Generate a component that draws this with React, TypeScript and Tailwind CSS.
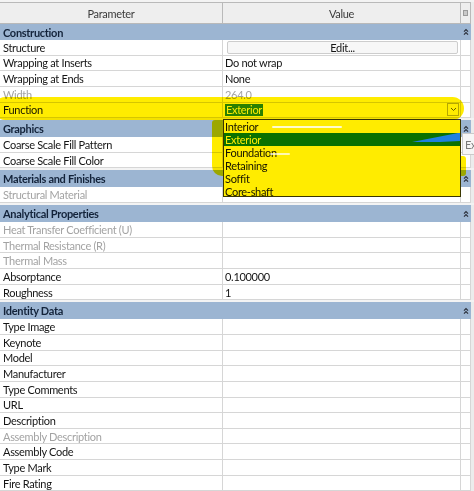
import type { ReactNode } from 'react'

type Row = {
  label: string
  value?: ReactNode
  muted?: boolean
}

type Section = {
  title: string
  first?: boolean
  rows: Row[]
}

function Collapse() {
  return (
    <svg width="6" height="8" viewBox="0 0 6 8" className="shrink-0">
      <path d="M1 3.6 L3 1.6 L5 3.6" fill="none" stroke="#2a2f3a" strokeWidth="1.2" />
      <path d="M1 6.6 L3 4.6 L5 6.6" fill="none" stroke="#2a2f3a" strokeWidth="1.2" />
    </svg>
  )
}

function EditButton() {
  return (
    <div className="mx-[2px] flex h-[13px] flex-1 items-center justify-center rounded-[2px] border border-[#cdcdcd] bg-[#f7f7f7]">
      Edit...
    </div>
  )
}

function FunctionValue() {
  return (
    <div className="flex flex-1 items-center justify-between pr-[1px]">
      <span className="bg-[#2a8ae0] px-[1px] leading-[12px] text-white">Exterior</span>
      <div className="flex h-[13px] w-[12px] items-center justify-center border border-[#b5b5b5] bg-white">
        <svg width="7" height="5" viewBox="0 0 7 5">
          <path d="M1 1 L3.5 3.5 L6 1" fill="none" stroke="#666" strokeWidth="1" />
        </svg>
      </div>
    </div>
  )
}

const sections: Section[] = [
  {
    title: 'Construction',
    first: true,
    rows: [
      { label: 'Structure', value: <EditButton /> },
      { label: 'Wrapping at Inserts', value: 'Do not wrap' },
      { label: 'Wrapping at Ends', value: 'None' },
      { label: 'Width', value: '264.0', muted: true },
      { label: 'Function', value: <FunctionValue /> },
    ],
  },
  {
    title: 'Graphics',
    rows: [{ label: 'Coarse Scale Fill Pattern' }, { label: 'Coarse Scale Fill Color' }],
  },
  {
    title: 'Materials and Finishes',
    rows: [{ label: 'Structural Material', muted: true }],
  },
  {
    title: 'Analytical Properties',
    rows: [
      { label: 'Heat Transfer Coefficient (U)', muted: true },
      { label: 'Thermal Resistance (R)', muted: true },
      { label: 'Thermal Mass', muted: true },
      { label: 'Absorptance', value: '0.100000' },
      { label: 'Roughness', value: '1' },
    ],
  },
  {
    title: 'Identity Data',
    rows: [
      { label: 'Type Image' },
      { label: 'Keynote' },
      { label: 'Model' },
      { label: 'Manufacturer' },
      { label: 'Type Comments' },
      { label: 'URL' },
      { label: 'Description' },
      { label: 'Assembly Description', muted: true },
      { label: 'Assembly Code' },
      { label: 'Type Mark' },
      { label: 'Fire Rating' },
    ],
  },
]

const options = ['Interior', 'Exterior', 'Foundation', 'Retaining', 'Soffit', 'Core-shaft']

function GroupRow({ title, first }: { title: string; first?: boolean }) {
  return (
    <div className={'flex shrink-0 flex-col ' + (first ? 'h-[16px]' : 'h-[19px] pt-[2px]')}>
      <div className="flex flex-1">
        <div className="flex w-[471px] items-center justify-between bg-[#9cb5d2] pl-[3px] pr-[2px] font-bold text-[#13233a]">
          <span>{title}</span>
          <Collapse />
        </div>
        <div className="w-[3px] bg-[#ececec]" />
      </div>
    </div>
  )
}

function DataRow({ label, value, muted }: Row) {
  return (
    <div className="flex h-[15.65px] shrink-0">
      <div
        className={
          'flex w-[223px] shrink-0 items-center border-b border-r border-[#d6d6d6] bg-white pl-[3px] ' +
          (muted ? 'text-[#a3a3a3]' : 'text-[#151515]')
        }
      >
        {label}
      </div>
      <div
        className={
          'flex w-[238px] shrink-0 items-center border-b border-r border-[#d6d6d6] bg-white pl-[2px] ' +
          (muted ? 'text-[#a3a3a3]' : 'text-[#151515]')
        }
      >
        {value}
      </div>
      <div className="w-[10px] shrink-0 border-b border-r border-[#d6d6d6] bg-white" />
      <div className="w-[3px] shrink-0 bg-[#ececec]" />
    </div>
  )
}

export default function App() {
  return (
    <div className="relative isolate h-[491px] w-[474px] overflow-hidden bg-[#f3f3f3] font-['Lato',sans-serif] text-[11px] tracking-[-0.3px] leading-[13px]">
      <div className="flex h-full flex-col pt-[2px]">
        {/* header */}
        <div className="flex h-[22px] shrink-0 text-[#3a3a3a]">
          <div className="flex w-[223px] items-center justify-center border-y border-r border-[#b9b9b9] bg-[#eeeeee]">
            Parameter
          </div>
          <div className="flex w-[238px] items-center justify-center border-y border-r border-[#b9b9b9] bg-[#eeeeee]">
            Value
          </div>
          <div className="flex w-[10px] items-center justify-center border-y border-r border-[#b9b9b9] bg-[#eeeeee]">
            <div className="h-[6px] w-[5px] border border-[#9a9a9a] bg-[#c9c9c9]" />
          </div>
          <div className="w-[3px] bg-[#ececec]" />
        </div>

        {sections.map((s) => (
          <div key={s.title} className="flex flex-col">
            <GroupRow title={s.title} first={s.first} />
            {s.rows.map((r) => (
              <DataRow key={r.label} {...r} />
            ))}
          </div>
        ))}
      </div>

      {/* dropdown list */}
      <div className="absolute left-[223px] top-[119px] flex h-[78px] w-[238px] flex-col border border-[#3a3a3a] bg-white text-[#151515]">
        {options.map((o) => (
          <div
            key={o}
            className={
              'flex flex-1 items-center pl-[1px] ' + (o === 'Exterior' ? 'bg-[#0a7a0a] text-white' : '')
            }
          >
            {o}
          </div>
        ))}
      </div>

      {/* tooltip, cut by the window edge as in the capture */}
      <div className="absolute left-[462px] top-[133px] flex h-[22px] w-[24px] items-center border border-[#cacaca] bg-[#f6f6f6] pl-[2px] text-[#7a7a7a]">
        Ext
      </div>

      {/* highlighter strokes */}
      <div className="pointer-events-none absolute left-[-6px] top-[97px] h-[23px] w-[470px] rounded-[12px] bg-[#ffec00] mix-blend-multiply" />
      <div className="pointer-events-none absolute left-[223px] top-[120px] h-[77px] w-[238px] bg-[#ffec00] mix-blend-multiply" />
      <div className="pointer-events-none absolute left-[212px] top-[120px] h-[56px] w-[11px] rounded-bl-[10px] rounded-tl-[3px] bg-[#ffec00] mix-blend-multiply" />
      <div className="pointer-events-none absolute left-[461px] top-[156px] h-[20px] w-[5px] rounded-r-[3px] bg-[#ffec00] mix-blend-multiply" />

      {/* streaks left by the marker */}
      <div className="pointer-events-none absolute left-[272px] top-[126px] h-[2px] w-[70px] rounded-full bg-white/80" />
      <div className="pointer-events-none absolute left-[270px] top-[153px] h-[2px] w-[20px] rounded-full bg-white/70" />
      <svg className="pointer-events-none absolute left-0 top-0" width="474" height="491">
        <polygon points="412,142 458,133 460,133 460,141 440,142" fill="#1f7fe0" />
      </svg>
    </div>
  )
}
